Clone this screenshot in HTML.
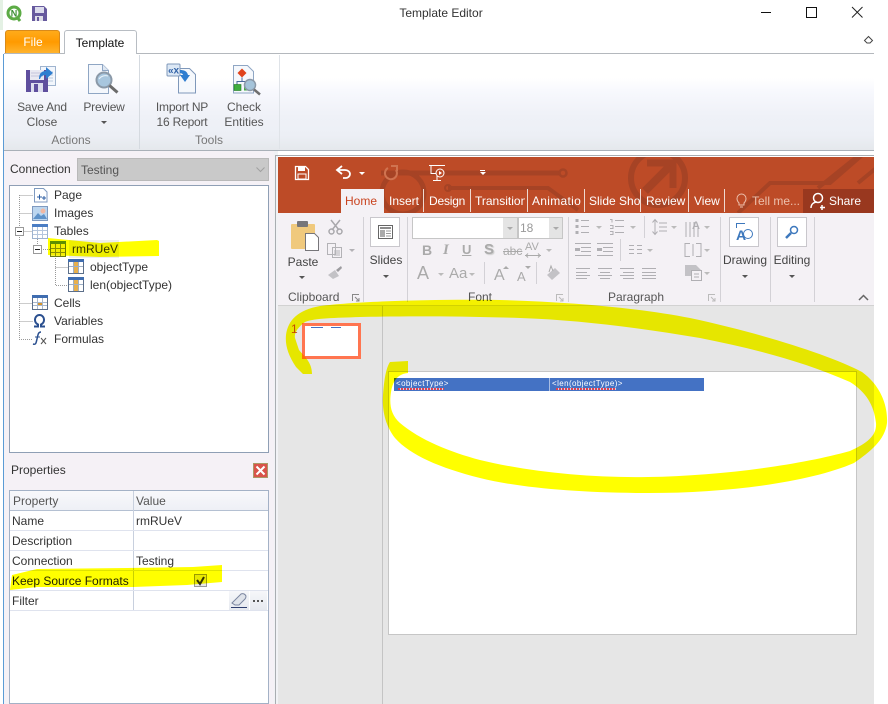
<!DOCTYPE html>
<html><head><meta charset="utf-8"><style>
html,body{margin:0;padding:0;background:#fff}
#r{position:relative;width:888px;height:704px;overflow:hidden;background:#fff;font-family:"Liberation Sans",sans-serif;font-size:12px;color:#333}
.a{position:absolute}
.t{position:absolute;white-space:nowrap;line-height:14px}
.c{transform:translateX(-50%);text-align:center}
.g{color:#555}
.w{color:#fff}
.l{color:#777}
svg{position:absolute;overflow:visible}
</style></head><body><div id="r">
<div class="a" style="left:0;top:0;width:3px;height:30px;background:#e4f1e4"></div>
<svg style="left:6px;top:5px" width="18" height="18" viewBox="0 0 18 18"><circle cx="8" cy="8" r="6" fill="#fff" stroke="#5cab45" stroke-width="3"/><path d="M11 12l3 4" stroke="#5cab45" stroke-width="3"/><text x="8" y="11.500" font-size="9" font-weight="bold" text-anchor="middle" fill="#3c8f34" font-family="Liberation Sans">N</text></svg>
<svg style="left:32px;top:6px" width="15" height="15" viewBox="0 0 15 15"><path d="M0 0h12l3 3v12H0z" fill="#675a9e"/><rect x="3" y="1" width="9" height="6" fill="#dcdcec"/><rect x="3" y="10" width="8" height="5" fill="#dfdfe8"/><rect x="5" y="11" width="2" height="4" fill="#675a9e"/></svg>
<div class="t c" style="left:441px;top:6px;color:#333">Template Editor</div>
<div class="a" style="left:761px;top:12px;width:10px;height:1px;background:#111"></div>
<div class="a" style="left:806px;top:7px;width:9px;height:9px;border:1px solid #111"></div>
<svg style="left:852px;top:7px" width="11" height="11"><path d="M0 0L10.500 10.500M10.500 0L0 10.500" stroke="#222" fill="none"/></svg>
<svg style="left:864px;top:36px" width="10" height="8"><path d="M.5 4.500L4.500 .5L8.500 4.500L6 7H3z" fill="none" stroke="#444"/></svg>
<div class="a" style="left:5px;top:30px;width:55px;height:23px;background:linear-gradient(#ffab1a,#ff9a00 50%,#ffb42e);border:1px solid #d98a1a;border-bottom:0;box-sizing:border-box;border-radius:3px 3px 0 0"></div>
<div class="t c w" style="left:33px;top:35px">File</div>
<div class="a" style="left:137px;top:53px;width:737px;height:1px;background:#b4b8bd"></div>
<div class="a" style="left:4px;top:53px;width:60px;height:1px;background:#b4b8bd"></div>
<div class="a" style="left:64px;top:30px;width:73px;height:25px;background:#fff;border:1px solid #b8bdc3;border-bottom:0;box-sizing:border-box;border-radius:3px 3px 0 0"></div>
<div class="t c" style="left:100px;top:36px;color:#111">Template</div>
<!-- ribbon -->
<div class="a" style="left:4px;top:54px;width:870px;height:96px;background:linear-gradient(#fff 0,#fff 25%,#f7f8fd 40%,#eff1f7 65%,#eceff5 85%,#e5e8ec 100%)"></div>
<div class="a" style="left:3px;top:54px;width:1px;height:650px;background:#5b9bd5"></div>
<div class="a" style="left:139px;top:55px;width:1px;height:94px;background:#d5dae0"></div>
<div class="a" style="left:279px;top:55px;width:1px;height:94px;background:#dfe3e8"></div>
<div class="a" style="left:4px;top:150px;width:870px;height:1px;background:#a9b0b8"></div>
<!-- Save icon -->
<svg style="left:26px;top:64px" width="32" height="30" viewBox="0 0 32 30"><rect x="14.500" y="2.500" width="15" height="19" fill="#f2f6fc" stroke="#9fb4cf"/><path d="M17 8h10M17 11h10M17 14h10M17 17h10" stroke="#b9c9de"/><path d="M0 6h22v22H0z" fill="#5f4f9e"/><rect x="4" y="6" width="14" height="10" fill="#e9e9f2"/><path d="M5 9h12M5 12h12" stroke="#c5c5dc"/><rect x="5" y="19" width="12" height="9" fill="#dde"/><rect x="8" y="20" width="4" height="8" fill="#5f4f9e"/><path d="M13 15c0-6 3-8 7-8V3l7 6-7 6v-4c-3 0-5 1-6 4z" fill="#2f7ed0"/></svg>
<!-- Preview icon -->
<svg style="left:87px;top:63px" width="33" height="32" viewBox="0 0 33 32"><path d="M1.500 1.500h14l6 6v23h-20z" fill="#f4f7fc" stroke="#8fa6c4"/><path d="M15.500 1.500v6h6" fill="#dde6f1" stroke="#8fa6c4"/><circle cx="17" cy="17" r="7.500" fill="#a8c6de" stroke="#8b99a8" stroke-width="2"/><path d="M12 16c2-3 6-4 9-3" stroke="#e7f2fa" fill="none"/><path d="M22.500 22.500l8 7" stroke="#6b6b6b" stroke-width="3"/></svg>
<!-- Import icon -->
<svg style="left:166px;top:63px" width="32" height="32" viewBox="0 0 32 32"><path d="M12.500 5.500h11l6 6v18.500h-17z" fill="#f5f8fc" stroke="#7f98ba"/><rect x="1" y="1" width="13" height="12" rx="1" fill="#dce8f5" stroke="#7f98ba"/><text x="7.500" y="10.500" font-size="10" font-weight="bold" text-anchor="middle" fill="#3464a8" font-family="Liberation Sans">«x</text><path d="M14 7c4 0 7 1 8 5h2l-5 7-5-7h3c0-1-2-2-3-2z" fill="#2f7ed0"/></svg>
<!-- Check icon -->
<svg style="left:231px;top:63px" width="32" height="33" viewBox="0 0 32 33"><path d="M2.500 2.500h14l6 6v21.500h-20z" fill="#f5f8fc" stroke="#8fa6c4"/><path d="M11 5.500l4.500 4.500L11 14.500 6.500 10z" fill="#e0431c"/><path d="M11 14.500v4M6 22v-3.500h12v3" fill="none" stroke="#4a6a9c"/><rect x="3" y="21.500" width="7" height="6" fill="#3fae3f" stroke="#1d7a1d" stroke-width=".6"/><rect x="13" y="21.500" width="6" height="6" fill="#3fae3f"/><circle cx="19" cy="22" r="5.500" fill="#a5c4da" stroke="#8b99a8" stroke-width="1.500"/><path d="M23 26.500l6 5" stroke="#6f6f6f" stroke-width="2.500"/></svg>
<div class="t c g" style="left:42px;top:100px;letter-spacing:-.2px">Save And</div>
<div class="t c g" style="left:42px;top:115px">Close</div>
<div class="t c g" style="left:104px;top:100px;letter-spacing:-.2px">Preview</div>
<div class="a" style="left:101px;top:121px;border:3px solid transparent;border-top:3px solid #555;border-bottom:0"></div>
<div class="t c l" style="left:71px;top:133px">Actions</div>
<div class="t c g" style="left:182px;top:100px;letter-spacing:-.2px">Import NP</div>
<div class="t c g" style="left:182px;top:115px;letter-spacing:-.2px">16 Report</div>
<div class="t c g" style="left:244px;top:100px">Check</div>
<div class="t c g" style="left:244px;top:115px">Entities</div>
<div class="t c l" style="left:209px;top:133px">Tools</div>

<!-- left panel -->
<div class="a" style="left:4px;top:151px;width:270px;height:553px;background:#f5f1f6"></div>
<div class="a" style="left:274px;top:151px;width:4px;height:553px;background:#f1f2f5"></div>
<div class="a" style="left:275px;top:155px;width:1px;height:549px;background:#a9adb1"></div>
<div class="t" style="left:10px;top:162px">Connection</div>
<div class="a" style="left:77px;top:158px;width:192px;height:23px;background:#c9c9c9;border:1px solid #b9b9b9;box-sizing:border-box"></div>
<div class="t" style="left:81px;top:163px;color:#555">Testing</div>
<svg style="left:256px;top:167px" width="9" height="6"><path d="M.5 .5l4 4 4-4" fill="none" stroke="#a0a0a0"/></svg>
<div class="a" style="left:9px;top:185px;width:260px;height:268px;background:#fff;border:1px solid #8f9fb5;box-sizing:border-box"></div>
<div class="a" style="left:69px;top:240px;width:50px;height:18px;background:#eee"></div>
<svg style="left:0;top:0" width="280" height="350"><g stroke="#999" stroke-dasharray="1 1" fill="none"><path d="M19.500 195V339.500H33M19.500 195.500H33M19.500 213.500H33M19.500 231.500H33M19.500 303.500H33M19.500 321.500H33M37.500 235V249.500H50M55.500 258V285.500H68M55.500 267.500H68"/></g>
<g fill="#fff" stroke="#999"><rect x="15.500" y="227.500" width="8" height="8"/><rect x="33.500" y="245.500" width="8" height="8"/></g><path d="M17 231.500h5M35 249.500h5" stroke="#222"/></svg>
<svg style="left:34px;top:188px" width="14" height="15"><path d="M.5 .5h9l3.500 3.500v10H.5z" fill="#fff" stroke="#7f9ac0"/><path d="M3 9h5M5.500 6.500v5M8 10h4M10 8v4" stroke="#2c5ea3"/></svg>
<svg style="left:32px;top:206px" width="16" height="15"><rect x=".5" y=".5" width="15" height="14" fill="#bcd6ef" stroke="#7f9ac0"/><path d="M1 13l5-6 3 3 3-2 3 5z" fill="#5e92c9"/><circle cx="11" cy="5" r="2.500" fill="#f2b8a2"/></svg>
<svg style="left:32px;top:224px" width="16" height="15"><rect x=".5" y=".5" width="15" height="14" fill="#fff" stroke="#9eb3cf"/><rect x="0" y="0" width="16" height="3" fill="#4a7dc4"/><path d="M5.500 3v11M10.500 3v11M1 6.500h14M1 10.500h14" stroke="#b5c6dd"/></svg>
<svg style="left:50px;top:241px" width="16" height="16"><rect x=".5" y=".5" width="15" height="15" fill="#f4ef52" stroke="#6b7a15"/><rect x="0" y="0" width="16" height="3" fill="#5e8f22"/><path d="M5.500 3v12M10.500 3v12M1 7.500h14M1 11.500h14" stroke="#8a8f1e"/></svg>
<svg style="left:68px;top:259px" width="16" height="15"><rect x=".5" y=".5" width="15" height="14" fill="#fff" stroke="#5c6f8a"/><rect x="0" y="0" width="16" height="3" fill="#3f6db0"/><rect x="6" y="3" width="5" height="11" fill="#e8b04c"/><path d="M5.500 3v11M10.500 3v11M1 7.500h14" stroke="#9fb0c6"/></svg>
<svg style="left:68px;top:277px" width="16" height="15"><rect x=".5" y=".5" width="15" height="14" fill="#fff" stroke="#5c6f8a"/><rect x="0" y="0" width="16" height="3" fill="#3f6db0"/><rect x="6" y="3" width="5" height="11" fill="#e8b04c"/><path d="M5.500 3v11M10.500 3v11M1 7.500h14" stroke="#9fb0c6"/></svg>
<svg style="left:32px;top:295px" width="16" height="15"><rect x=".5" y=".5" width="15" height="14" fill="#fff" stroke="#5c6f8a"/><rect x="0" y="0" width="16" height="3" fill="#3f6db0"/><rect x="6" y="7" width="5" height="4" fill="#d9962a"/><path d="M5.500 3v11M10.500 3v11M1 7.500h14M1 10.500h14" stroke="#a9b8cc"/></svg>
<svg style="left:33px;top:314px" width="13" height="14"><path d="M1 12.500h4v-2C3 9.500 2 8 2 6c0-3 2-5 4.500-5S11 3 11 6c0 2-1 3.500-3 4.500v2h4" fill="none" stroke="#2a4f8f" stroke-width="2"/></svg>
<svg style="left:32px;top:331px" width="16" height="15"><path d="M1 13c3 1 3-1 4-5s1-7 4-7" fill="none" stroke="#2a4f8f" stroke-width="1.500"/><path d="M3 6h5" stroke="#2a4f8f"/><path d="M9 7l5 6M14 7l-5 6" stroke="#555"/></svg>
<div class="t" style="left:54px;top:188px">Page</div>
<div class="t" style="left:54px;top:206px">Images</div>
<div class="t" style="left:54px;top:224px">Tables</div>
<div class="t" style="left:72px;top:242px">rmRUeV</div>
<div class="t" style="left:90px;top:260px">objectType</div>
<div class="t" style="left:90px;top:278px">len(objectType)</div>
<div class="t" style="left:54px;top:296px">Cells</div>
<div class="t" style="left:54px;top:314px">Variables</div>
<div class="t" style="left:54px;top:332px">Formulas</div>
<div class="t" style="left:11px;top:463px">Properties</div>
<div class="a" style="left:253px;top:463px;width:13px;height:13px;background:#d9534a;border:1px solid #a96"></div>
<svg style="left:253px;top:463px" width="15" height="15"><path d="M3.500 3.500l8 8M11.500 3.500l-8 8" stroke="#fff" stroke-width="2"/></svg>
<div class="a" style="left:9px;top:490px;width:260px;height:214px;background:#fff;border:1px solid #a3b1c6;box-sizing:border-box"></div>
<div class="a" style="left:10px;top:491px;width:258px;height:19px;background:linear-gradient(#f8f8fb,#eef0f6);border-bottom:1px solid #b4c0d2"></div>
<div class="a" style="left:133px;top:491px;width:1px;height:120px;background:#c8d0de"></div>
<div class="a" style="left:10px;top:530px;width:258px;height:1px;background:#dfe3ee"></div>
<div class="a" style="left:10px;top:550px;width:258px;height:1px;background:#dfe3ee"></div>
<div class="a" style="left:10px;top:570px;width:258px;height:1px;background:#dfe3ee"></div>
<div class="a" style="left:10px;top:590px;width:258px;height:1px;background:#dfe3ee"></div>
<div class="a" style="left:10px;top:610px;width:258px;height:1px;background:#dfe3ee"></div>
<div class="t" style="left:13px;top:494px;color:#555">Property</div>
<div class="t" style="left:136px;top:494px;color:#555">Value</div>
<div class="t" style="left:12px;top:514px">Name</div><div class="t" style="left:136px;top:514px">rmRUeV</div>
<div class="t" style="left:12px;top:534px">Description</div>
<div class="t" style="left:12px;top:554px">Connection</div><div class="t" style="left:136px;top:554px">Testing</div>
<div class="t" style="left:12px;top:574px;color:#222">Keep Source Formats</div>
<div class="t" style="left:12px;top:594px">Filter</div>
<div class="a" style="left:194px;top:574px;width:13px;height:13px;background:#e8e8e8;border:1px solid #999;box-sizing:border-box"></div>
<svg style="left:194px;top:574px" width="13" height="13"><path d="M3 6l3 4 4-7" fill="none" stroke="#333" stroke-width="2"/></svg>
<div class="a" style="left:229px;top:591px;width:38px;height:19px;background:linear-gradient(#f6f7fa,#e6e9ef)"></div>
<div class="a" style="left:249px;top:591px;width:1px;height:19px;background:#fff"></div>
<svg style="left:230px;top:592px" width="18" height="17"><path d="M2 11L11 2c2-1 4 0 5 2 0 1 0 2-1 3l-6 6H5z" fill="#dfe3ea" stroke="#7b86a0"/><path d="M1 15.500h16" stroke="#2f3f6f"/></svg>
<div class="a" style="left:253px;top:600px;width:2px;height:2px;background:#555;box-shadow:4px 0 #555,8px 0 #555"></div>

<!-- ppt -->
<div class="a" style="left:278px;top:157px;width:596px;height:547px;background:#e6e6e6"></div>
<div class="a" style="left:276px;top:155px;width:598px;height:1px;background:#a9adb1"></div>
<div class="a" style="left:278px;top:157px;width:596px;height:56px;background:#bd4b27"></div>
<svg style="left:278px;top:158px" width="596" height="55"><clipPath id="cp"><rect x="0" y="-1" width="596" height="56"/></clipPath><g clip-path="url(#cp)" fill="none" stroke="#a64325"><path d="M103 15H282" stroke-width="5"/><circle cx="285" cy="15" r="3.500" stroke-width="2.500"/><path d="M170 30H270L300 52" stroke-width="4"/><circle cx="170" cy="30" r="3" stroke-width="2"/><circle cx="380" cy="20" r="27" stroke-width="6"/><path d="M369 5H395V30" stroke-width="7"/><path d="M367 33L392 8" stroke-width="8"/><path d="M460 55L492 25H552L590 -8M540 30L596 -15M580 25L620 -8" stroke-width="4"/><circle cx="125" cy="35" r="21" stroke-width="5"/></g></svg>
<svg style="left:295px;top:166px" width="14" height="14"><path d="M.5 .5h10l3 3v10H.5z" fill="none" stroke="#fff" stroke-width="1.300"/><rect x="3" y="1" width="7" height="4" fill="#fff"/><rect x="3" y="8" width="8" height="5" fill="none" stroke="#fff"/></svg>
<svg style="left:336px;top:165px" width="16" height="15"><path d="M6 1L1 5l5 4" fill="none" stroke="#fff" stroke-width="1.800"/><path d="M1 5h8c3 0 5 2 5 4s-2 4-4 4H7" fill="none" stroke="#fff" stroke-width="1.800"/></svg>
<div class="a" style="left:359px;top:172px;border:3px solid transparent;border-top:3px solid #fff;border-bottom:0"></div>
<svg style="left:384px;top:165px" width="14" height="15"><path d="M4 3a6 6 0 1 0 8 2" fill="none" stroke="#d07350" stroke-width="2"/><path d="M7 1h6v5" fill="none" stroke="#d07350" stroke-width="2"/></svg>
<svg style="left:429px;top:165px" width="18" height="16"><path d="M0 .5h16M2 .5v8h5M8 9v6M4 15.500h8" fill="none" stroke="#fff"/><circle cx="11" cy="8" r="4" fill="#bd4b27" stroke="#fff"/><path d="M10 6l3 2-3 2z" fill="#fff"/></svg>
<div class="a" style="left:480px;top:170px;width:5px;height:1px;background:#fff"></div>
<div class="a" style="left:480px;top:172px;border:3px solid transparent;border-top:3px solid #fff;border-bottom:0"></div>
<div class="a" style="left:341px;top:189px;width:43px;height:24px;background:#f4f1f5"></div>
<div class="a" style="left:803px;top:189px;width:71px;height:24px;background:#99381f"></div>
<div class="t" style="left:345px;top:194px;color:#c9431f">Home</div>
<div class="t w" style="left:389px;top:194px">Insert</div>
<div class="t w" style="left:429px;top:194px;letter-spacing:-.2px">Design</div>
<div class="a" style="left:475px;top:190px;width:50px;height:20px;overflow:hidden"><div class="t w" style="left:0;top:4px">Transition</div></div>
<div class="a" style="left:532px;top:190px;width:50px;height:20px;overflow:hidden"><div class="t w" style="left:0;top:4px;letter-spacing:.3px">Animatio</div></div>
<div class="t w" style="left:589px;top:194px">Slide Sho</div>
<div class="t w" style="left:646px;top:194px">Review</div>
<div class="t w" style="left:694px;top:194px">View</div>
<div class="t" style="left:752px;top:194px;color:#ecc0ad">Tell me...</div>
<div class="t w" style="left:829px;top:194px">Share</div>
<div class="a" style="left:423px;top:189px;width:1px;height:23px;background:#efd9d0"></div>
<div class="a" style="left:470px;top:189px;width:1px;height:23px;background:#efd9d0"></div>
<div class="a" style="left:527px;top:189px;width:1px;height:23px;background:#efd9d0"></div>
<div class="a" style="left:584px;top:189px;width:1px;height:23px;background:#efd9d0"></div>
<div class="a" style="left:640px;top:189px;width:1px;height:23px;background:#efd9d0"></div>
<div class="a" style="left:688px;top:189px;width:1px;height:23px;background:#efd9d0"></div>
<div class="a" style="left:724px;top:189px;width:1px;height:23px;background:#efd9d0"></div>
<svg style="left:736px;top:193px" width="12" height="16"><path d="M3 10C1 8 1 6 1 5.500a4.500 4.500 0 0 1 9 0c0 .5 0 2.500-2 4.500v2H3z" fill="none" stroke="#ecc0ad"/><path d="M4 14h3" stroke="#ecc0ad"/></svg>
<svg style="left:810px;top:192px" width="18" height="18"><circle cx="8" cy="6" r="4.500" fill="none" stroke="#fff" stroke-width="1.500"/><path d="M1 16c0-4 3-6 6-6M12 13v5M10 15.500h5" fill="none" stroke="#fff" stroke-width="1.500"/></svg>
<div class="a" style="left:278px;top:213px;width:596px;height:92px;background:#f4f1f5"></div>
<div class="a" style="left:278px;top:305px;width:596px;height:1px;background:#d2d2d2"></div>
<div class="a" style="left:363px;top:217px;width:1px;height:85px;background:#d3d1d6"></div>
<div class="a" style="left:407px;top:217px;width:1px;height:85px;background:#d3d1d6"></div>
<div class="a" style="left:568px;top:217px;width:1px;height:85px;background:#d3d1d6"></div>
<div class="a" style="left:720px;top:217px;width:1px;height:85px;background:#d3d1d6"></div>
<div class="a" style="left:770px;top:217px;width:1px;height:85px;background:#d3d1d6"></div>
<div class="a" style="left:814px;top:217px;width:1px;height:85px;background:#d3d1d6"></div>
<svg style="left:291px;top:220px" width="31" height="32"><rect x="0" y="4" width="24" height="25" rx="1" fill="#f0c97d"/><rect x="6" y="1" width="11" height="6" rx="1" fill="#77767a"/><path d="M14.500 13.500h9l4 4v13h-13z" fill="#fff" stroke="#77767a"/></svg>
<div class="t c" style="left:303px;top:255px;color:#444">Paste</div>
<div class="a" style="left:299px;top:276px;border:3px solid transparent;border-top:3px solid #555;border-bottom:0"></div>
<svg style="left:328px;top:219px" width="15" height="16"><path d="M3 1l8 10M12 1L4 11" stroke="#a9a8ac" stroke-width="1.500"/><circle cx="3.500" cy="12.500" r="2.500" fill="none" stroke="#a9a8ac" stroke-width="1.500"/><circle cx="11.500" cy="12.500" r="2.500" fill="none" stroke="#a9a8ac" stroke-width="1.500"/></svg>
<svg style="left:327px;top:243px" width="15" height="15"><path d="M.5 .5h8v11h-8zM5.500 4.500h9v10h-9z" fill="#f4f1f5" stroke="#b3b2b6"/><path d="M7 8h6M7 10h6M7 12h6" stroke="#b3b2b6"/></svg>
<div class="a" style="left:349px;top:249px;border:3px solid transparent;border-top:3px solid #b3b2b6;border-bottom:0"></div>
<svg style="left:327px;top:265px" width="16" height="15"><path d="M1 10l7-5 4 6-6 3z" fill="#c3c2c6"/><path d="M9 5l5-4 1 2-4 4z" fill="#9d9ca0"/></svg>
<div class="t" style="left:288px;top:290px;color:#555">Clipboard</div>
<svg style="left:352px;top:294px" width="8" height="8"><path d="M.5 7V.5H7M3 3l4 4M4 7h3V4" fill="none" stroke="#888"/></svg>
<div class="a" style="left:370px;top:217px;width:30px;height:30px;background:#fff;border:1px solid #c9c7cc;box-sizing:border-box"></div>
<svg style="left:378px;top:225px" width="15" height="14"><rect x=".5" y=".5" width="14" height="13" fill="#fff" stroke="#666"/><path d="M2 3h11" stroke="#666" stroke-width="1.500"/><rect x="2" y="5" width="5" height="7" fill="#aaa"/><path d="M8 6h5M8 8.500h5M8 11h5" stroke="#999"/></svg>
<div class="t c" style="left:386px;top:253px;color:#444">Slides</div>
<div class="a" style="left:383px;top:275px;border:3px solid transparent;border-top:3px solid #555;border-bottom:0"></div>
<div class="a" style="left:412px;top:217px;width:151px;height:22px;background:#fff;border:1px solid #c6c6c6;box-sizing:border-box"></div>
<div class="a" style="left:503px;top:218px;width:14px;height:20px;background:#e4e4e4"></div>
<div class="a" style="left:549px;top:218px;width:13px;height:20px;background:#e4e4e4"></div>
<div class="a" style="left:517px;top:218px;width:2px;height:20px;background:#c6c6c6"></div>
<div class="a" style="left:507px;top:227px;border:3px solid transparent;border-top:3px solid #aaa;border-bottom:0"></div>
<div class="a" style="left:553px;top:227px;border:3px solid transparent;border-top:3px solid #aaa;border-bottom:0"></div>
<div class="t" style="left:520px;top:221px;color:#999">18</div>
<div class="t" style="left:422px;top:243px;color:#aaa;font-weight:bold;font-size:14px">B</div>
<div class="t" style="left:443px;top:243px;color:#aaa;font-style:italic;font-family:'Liberation Serif',serif;font-weight:bold;font-size:15px">I</div>
<div class="t" style="left:462px;top:243px;color:#aaa;font-weight:bold;font-size:13px;text-decoration:underline">U</div>
<div class="t" style="left:484px;top:243px;color:#aaa;font-weight:bold;font-size:15px;text-shadow:1px 1px 1px #ccc">S</div>
<div class="t" style="left:503px;top:244px;color:#aaa;text-decoration:line-through">abc</div>
<div class="t" style="left:525px;top:240px;color:#aaa;font-size:11px">AV</div>
<svg style="left:525px;top:253px" width="17" height="5"><path d="M0 2.500h16M3 .5L1 2.500l2 2M13 .5l2 2-2 2" fill="none" stroke="#aaa"/></svg>
<div class="a" style="left:546px;top:249px;border:3px solid transparent;border-top:3px solid #bbb;border-bottom:0"></div>
<div class="t" style="left:417px;top:264px;color:#aaa;font-size:18px;line-height:18px">A</div>
<div class="a" style="left:438px;top:273px;border:3px solid transparent;border-top:3px solid #bbb;border-bottom:0"></div>
<div class="t" style="left:449px;top:265px;color:#aaa;font-size:15px;line-height:18px">Aa</div>
<div class="a" style="left:469px;top:273px;border:3px solid transparent;border-top:3px solid #bbb;border-bottom:0"></div>
<div class="a" style="left:484px;top:262px;width:1px;height:22px;background:#d3d1d6"></div>
<div class="t" style="left:494px;top:267px;color:#aaa;font-size:16px;line-height:18px">A</div>
<div class="t" style="left:517px;top:269px;color:#aaa;font-size:13px;line-height:16px">A</div>
<div class="a" style="left:503px;top:266px;border:3px solid transparent;border-bottom:3px solid #aaa;border-top:0"></div>
<div class="a" style="left:525px;top:266px;border:3px solid transparent;border-top:3px solid #aaa;border-bottom:0"></div>
<div class="a" style="left:536px;top:262px;width:1px;height:22px;background:#d3d1d6"></div>
<svg style="left:546px;top:265px" width="15" height="16"><path d="M1 10l8-7 5 5-8 7z" fill="#c3c2c6"/><path d="M3 7L5 1l2 5" fill="none" stroke="#aaa"/></svg>
<div class="t c" style="left:480px;top:290px;color:#555">Font</div>
<svg style="left:556px;top:294px" width="8" height="8"><path d="M.5 7V.5H7M3 3l4 4M4 7h3V4" fill="none" stroke="#bbb"/></svg>
<!-- paragraph icons: origin 574,218 -->
<svg style="left:574px;top:218px" width="140" height="70" stroke="#b0afb3" fill="none">
<path d="M7 2.500h8M7 8.500h8M7 14.500h8"/><path d="M1.500 2.500h3M1.500 8.500h3M1.500 14.500h3" stroke-width="3"/>
<path d="M41 2.500h9M41 8.500h9M41 14.500h9"/><path d="M36 1.500h2v3M36 7.500h3v3h-3M36 13.500h3v3h-3" stroke-width="1"/>
<path d="M85 5h8M85 9h8M85 13h8M81 2v14M78.500 4.500l2.500-3 2.500 3M78.500 13.500l2.500 3 2.500-3"/>
<path d="M112 4v15M116 4v15M120 4v15"/><text x="122" y="11" font-size="11" font-weight="bold" fill="#b0afb3" stroke="none" text-anchor="middle" font-family="Liberation Sans">A</text><path d="M124 10v9"/>
<path d="M1 25.500h16M7 29.500h10M7 33.500h10M1 37.500h16"/><path d="M1 31.500h5" stroke-width="3"/>
<path d="M23 25.500h16M29 29.500h10M29 33.500h10M23 37.500h16"/><path d="M23 31.500h5" stroke-width="3"/>
<path d="M55 27.500h5M55 31.500h5M55 35.500h5M63 27.500h5M63 31.500h5M63 35.500h5"/>
<path d="M116 25.500h-5v13h5M122 25.500h5v13h-5M119 26v12"/>
<path d="M2 50.500h14M2 54.500h11M2 57.500h14M2 60.500h11"/><path d="M24 50.500h14M26 54.500h10M24 57.500h14M26 60.500h10"/><path d="M46 50.500h14M49 54.500h11M46 57.500h14M49 60.500h11"/><path d="M68 50.500h14M68 54.500h14M68 57.500h14M68 60.500h14"/>
<path d="M111 47h11l5 5h-10v6h-6z" fill="#c3c2c6" stroke="none"/><rect x="117.500" y="52.500" width="10" height="10" fill="#f4f1f5"/><path d="M120 56h5M120 59h5"/></svg>
<div class="a" style="left:596px;top:226px;border:3px solid transparent;border-top:3px solid #bbb;border-bottom:0"></div>
<div class="a" style="left:630px;top:226px;border:3px solid transparent;border-top:3px solid #bbb;border-bottom:0"></div>
<div class="a" style="left:671px;top:226px;border:3px solid transparent;border-top:3px solid #bbb;border-bottom:0"></div>
<div class="a" style="left:704px;top:226px;border:3px solid transparent;border-top:3px solid #bbb;border-bottom:0"></div>
<div class="a" style="left:644px;top:216px;width:1px;height:22px;background:#d3d1d6"></div>
<div class="a" style="left:620px;top:239px;width:1px;height:22px;background:#d3d1d6"></div>
<div class="a" style="left:647px;top:249px;border:3px solid transparent;border-top:3px solid #bbb;border-bottom:0"></div>
<div class="a" style="left:704px;top:249px;border:3px solid transparent;border-top:3px solid #bbb;border-bottom:0"></div>
<div class="a" style="left:704px;top:272px;border:3px solid transparent;border-top:3px solid #bbb;border-bottom:0"></div>
<div class="t c" style="left:636px;top:290px;color:#555">Paragraph</div>
<svg style="left:708px;top:294px" width="8" height="8"><path d="M.5 7V.5H7M3 3l4 4M4 7h3V4" fill="none" stroke="#bbb"/></svg>
<div class="a" style="left:729px;top:217px;width:30px;height:30px;background:#fff;border:1px solid #c9c7cc;box-sizing:border-box"></div>
<svg style="left:736px;top:223px" width="18" height="18"><path d="M.5 5V.5H9" fill="none" stroke="#3d78bd"/><circle cx="12" cy="11" r="4.500" fill="none" stroke="#3d78bd"/><text x="5" y="17" font-size="14" font-weight="bold" text-anchor="middle" fill="#3d78bd" font-family="Liberation Sans">A</text></svg>
<div class="t c" style="left:745px;top:253px;color:#444">Drawing</div>
<div class="a" style="left:742px;top:275px;border:3px solid transparent;border-top:3px solid #555;border-bottom:0"></div>
<div class="a" style="left:777px;top:217px;width:30px;height:30px;background:#fff;border:1px solid #c9c7cc;box-sizing:border-box"></div>
<svg style="left:785px;top:225px" width="14" height="14"><circle cx="9" cy="5" r="3.500" fill="none" stroke="#3d78bd" stroke-width="1.500"/><path d="M6 8l-5 5" stroke="#3d78bd" stroke-width="2.500"/></svg>
<div class="t c" style="left:792px;top:253px;color:#444">Editing</div>
<div class="a" style="left:789px;top:275px;border:3px solid transparent;border-top:3px solid #555;border-bottom:0"></div>
<svg style="left:858px;top:294px" width="11" height="7"><path d="M1 6l4.500-4.500L10 6" fill="none" stroke="#666" stroke-width="1.500"/></svg>
<!-- slide area -->
<div class="a" style="left:382px;top:306px;width:1px;height:398px;background:#c4c4c4"></div>
<div class="t" style="left:291px;top:322px;color:#c44a24">1</div>
<div class="a" style="left:302px;top:323px;width:59px;height:36px;background:#fff;border:3px solid #ff7550;box-sizing:border-box"></div>
<div class="a" style="left:311px;top:327px;width:12px;height:1px;background:#4472c4"></div>
<div class="a" style="left:331px;top:327px;width:10px;height:1px;background:#4472c4"></div>
<div class="a" style="left:388px;top:371px;width:469px;height:264px;background:#fff;border:1px solid #c6c6c6;box-sizing:border-box"></div>
<div class="a" style="left:394px;top:378px;width:310px;height:13px;background:#4472c4"></div>
<div class="a" style="left:549px;top:378px;width:1px;height:13px;background:#a9bde3"></div>
<div class="t w" style="left:396px;top:377px;font-size:8px;letter-spacing:.4px">&lt;objectType&gt;</div>
<div class="t w" style="left:552px;top:377px;font-size:8px;letter-spacing:.4px">&lt;len(objectType)&gt;</div>
<div class="a" style="left:398px;top:388px;width:46px;height:2px;background:repeating-linear-gradient(90deg,#e04050 0 2px,#c9d4ee 2px 3px)"></div>
<div class="a" style="left:556px;top:388px;width:60px;height:2px;background:repeating-linear-gradient(90deg,#e04050 0 2px,#c9d4ee 2px 3px)"></div>
<div class="a" style="left:874px;top:54px;width:14px;height:650px;background:#fff"></div>
<!-- highlights -->
<svg style="left:0;top:0;mix-blend-mode:multiply" width="888" height="704" fill="#ff0" stroke="none">
<path d="M303 374L296 367C288 355 285 345 286 335C288 320 298 310 320 306C360 301 440 299 500 300C570 302 640 308 690 318C760 333 830 355 862 372C880 385 888 405 887 423C885 440 870 452 854 463C810 482 730 493 648 493C580 493 520 488 480 478C440 468 410 455 395 438C385 425 382 410 383 395C384 380 386 368 390 362L408 361L408 373C398 374 393 380 391 392C389 405 391 415 400 423C420 440 450 452 480 460C530 472 590 478 648 477C720 476 800 465 850 451C868 443 877 435 876 423C874 405 866 392 850 382C800 360 750 348 700 338C640 328 580 320 520 318C460 316 400 316 360 317C335 318 315 318 305 322C298 327 294 333 295 338L299 350C304 356 312 362 312 374Z"/>
<path d="M48 238L100 243L157 240L159 241V256L100 257L48 255Z"/>
<path d="M12 575L37 569L127 568L193 567L222 565V582L187 585L133 587L37 587L10 590Z"/>
</svg>
</div></body></html>
